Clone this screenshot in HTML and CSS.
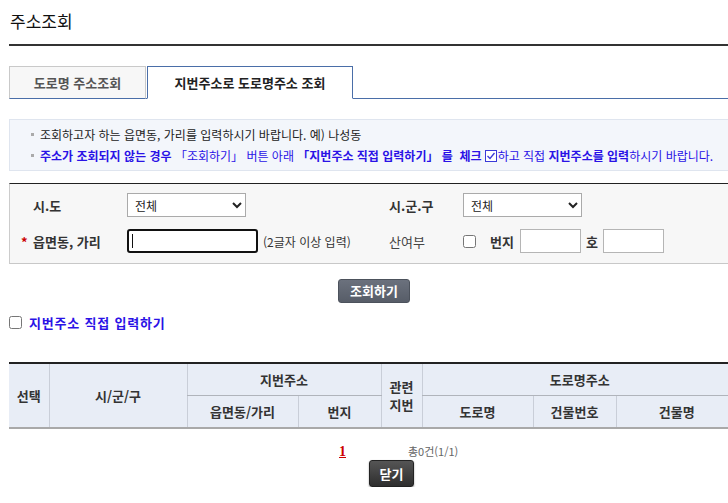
FILE: index.html
```html
<!DOCTYPE html>
<html lang="ko">
<head>
<meta charset="utf-8">
<title>주소조회</title>
<link rel="stylesheet" href="styles.css">
</head>
<body>
<div class="page">
  <h1 class="title">주소조회</h1>

  <ul class="tabs">
    <li class="tab">도로명 주소조회</li>
    <li class="tab active">지번주소로 도로명주소 조회</li>
  </ul>

  <div class="info">
    <ul>
      <li>조회하고자 하는 읍면동, 가리를 입력하시기 바랍니다. 예) 나성동</li>
      <li class="blue"><b>주소가 조회되지 않는 경우</b> 「조회하기」 버튼 아래 <b>「지번주소 직접 입력하기」 를 &nbsp;체크</b><svg class="chk-icon" width="12" height="12" viewBox="0 0 12 12"><rect x="0.5" y="0.5" width="11" height="11" fill="#fff" stroke="#3a3ad8"/><path d="M2.5 6 L5 8.5 L9.5 3" fill="none" stroke="#3a3ad8" stroke-width="1.3"/></svg>하고 직접 <b>지번주소를 입력</b>하시기 바랍니다.</li>
    </ul>
  </div>

  <div class="search">
    <div class="row">
      <div class="label">시.도</div>
      <div class="field"><select class="sel"><option>전체</option></select></div>
      <div class="label2">시.군.구</div>
      <div class="field"><select class="sel"><option>전체</option></select></div>
    </div>
    <div class="row">
      <div class="label req"><span class="star">*</span>읍면동, 가리</div>
      <div class="field">
        <span class="focus-wrap"><input class="txt focused" type="text"><span class="caret"></span></span>
        <span class="hint">(2글자 이상 입력)</span>
      </div>
      <div class="label2 light">산여부</div>
      <div class="field">
        <input type="checkbox" class="cb">
        <span class="bold-label bj">번지</span>
        <input class="txt small" type="text">
        <span class="bold-label ho">호</span>
        <input class="txt small" type="text">
      </div>
    </div>
  </div>

  <div class="btn-area">
    <button class="btn-search">조회하기</button>
  </div>

  <label class="direct">
    <input type="checkbox" class="cb">
    <span>지번주소 직접 입력하기</span>
  </label>

  <table class="result">
    <colgroup>
      <col style="width:40px">
      <col style="width:138px">
      <col style="width:111px">
      <col style="width:83px">
      <col style="width:41px">
      <col style="width:111px">
      <col style="width:83px">
      <col style="width:121px">
    </colgroup>
    <thead>
      <tr>
        <th rowspan="2">선택</th>
        <th rowspan="2">시/군/구</th>
        <th colspan="2">지번주소</th>
        <th rowspan="2" class="two">관련<br>지번</th>
        <th colspan="3">도로명주소</th>
      </tr>
      <tr>
        <th>읍면동/가리</th>
        <th>번지</th>
        <th>도로명</th>
        <th>건물번호</th>
        <th>건물명</th>
      </tr>
    </thead>
  </table>

  <div class="pager">
    <a class="pnum">1</a>
    <span class="count">총0건(1/1)</span>
  </div>
  <div class="close-area">
    <button class="btn-close">닫기</button>
  </div>
</div>
</body>
</html>
```

FILE: styles.css
```css
html, body {
  margin: 0;
  padding: 0;
  overflow: hidden;
  background: #fff;
}
body {
  font-family: "Noto Sans CJK KR", "Noto Sans", sans-serif;
  font-size: 12px;
  color: #222;
}
.page {
  margin-left: 9px;
  width: 728px;
}
.title {
  margin: 0;
  height: 44px;
  line-height: 42px;
  font-size: 17px;
  font-weight: normal;
  color: #111;
  padding-left: 1px;
  border-bottom: 2px solid #333;
  width: 730px;
}
.tabs {
  list-style: none;
  margin: 20px 0 0 0;
  padding: 0;
  display: flex;
  gap: 1px;
  border-bottom: 1px solid #4a6ea8;
  height: 32px;
}
.tab {
  box-sizing: border-box;
  height: 33px;
  border: 1px solid #c9c9c9;
  border-bottom: 1px solid #4a6ea8;
  background: #f7f7f7;
  color: #555;
  font-weight: bold;
  font-size: 13px;
  line-height: 31px;
  text-align: center;
  width: 137px;
}
.tab.active {
  width: 206px;
  background: #fff;
  color: #222;
  border: 1px solid #4a6ea8;
  border-bottom: 1px solid #fff;
}
.info {
  margin-top: 20px;
  background: #f3f6fb;
  border: 1px solid #dfe5ef;
  height: 50px;
  box-sizing: content-box;
  width: 730px;
}
.info ul {
  list-style: none;
  margin: 0;
  padding: 4px 0 0 30px;
}
.info li {
  position: relative;
  height: 21px;
  line-height: 21px;
  white-space: nowrap;
}
.info li::before {
  content: "";
  position: absolute;
  left: -9px;
  top: 9px;
  width: 3px;
  height: 3px;
  background: #aaa;
}
.info .blue {
  color: #2a12e6;
}
.chk-icon {
  vertical-align: -1px;
  margin: 0 1px 0 3px;
}
.search {
  margin-top: 12px;
  border-top: 1px solid #222;
  border-left: 1px solid #ccc;
  border-bottom: 1px solid #c8c8c8;
  background: #f7f7f7;
  padding: 9px 0 10px 0;
  display: flex;
  flex-direction: column;
  gap: 12px;
  width: 730px;
}
.row {
  display: grid;
  grid-template-columns: 117px 262px 74px auto;
  align-items: center;
  height: 24px;
}
.label, .label2 {
  font-weight: bold;
  font-size: 13px;
  color: #333;
}
.label {
  padding-left: 23px;
}
.label.req {
  padding-left: 11px;
}
.star {
  display: inline-block;
  width: 12px;
  color: #c00;
  font-weight: bold;
}
.label2.light {
  font-weight: normal;
  color: #444;
}
.field {
  display: flex;
  align-items: center;
  height: 24px;
}
.sel {
  width: 119px;
  height: 24px;
  border: 1px solid #aaa;
  border-radius: 0;
  background: #fff;
  font-family: inherit;
  font-size: 12px;
  color: #222;
  padding: 0 3px;
}
.txt {
  box-sizing: border-box;
  height: 24px;
  border: 1px solid #b5b5b5;
  background: #fff;
  padding: 0 4px;
  font-family: inherit;
  outline: none;
}
.focus-wrap {
  position: relative;
  display: inline-flex;
}
.txt.focused {
  width: 131px;
  border: 2px solid #111;
  border-radius: 3px;
}
.caret {
  position: absolute;
  left: 5px;
  top: 5px;
  width: 1px;
  height: 14px;
  background: #111;
}
.txt.small {
  width: 61px;
}
.hint {
  margin-left: 5px;
  color: #333;
}
.cb {
  margin: 0;
  width: 13px;
  height: 13px;
}
.bold-label {
  font-weight: bold;
  font-size: 13px;
  color: #333;
}
.bj {
  margin-left: 14px;
  margin-right: 6px;
}
.ho {
  margin-left: 5px;
  margin-right: 5px;
}
.btn-area {
  margin-top: 15px;
  text-align: center;
  width: 730px;
  height: 24px;
}
.btn-search {
  width: 72px;
  height: 24px;
  border: 1px solid #4c525c;
  border-radius: 3px;
  background: linear-gradient(#6b717d, #575d68);
  color: #fff;
  font-family: inherit;
  font-weight: bold;
  font-size: 13px;
  padding: 0;
  line-height: 22px;
}
.direct {
  margin-top: 13px;
  display: flex;
  align-items: center;
  gap: 7px;
  height: 13px;
  color: #2a12e6;
  font-weight: bold;
  font-size: 13px;
  letter-spacing: 0.8px;
}
.result {
  margin-top: 33px;
  border-collapse: collapse;
  table-layout: fixed;
  width: 728px;
  border-top: 2px solid #222;
  border-bottom: 2px solid #a9a9a9;
}
.result th {
  background: #e8edf6;
  color: #333;
  font-size: 13px;
  font-weight: bold;
  height: 31px;
  padding: 0;
  border-left: 1px solid #c9ced8;
  border-bottom: 1px solid #b0b4bb;
}
.result tr:first-child th:first-child {
  border-left: none;
}
.result th.two {
  line-height: 18px;
}
.pager {
  display: flex;
  align-items: baseline;
  padding-left: 330px;
  margin-top: 14px;
  height: 16px;
}
.pnum {
  color: #c00;
  font-family: "Liberation Serif", serif;
  font-weight: bold;
  font-size: 14px;
  text-decoration: underline;
}
.count {
  margin-left: 62px;
  font-size: 11px;
  color: #666;
}
.close-area {
  margin-top: 1px;
  padding-left: 360px;
}
.btn-close {
  width: 45px;
  height: 27px;
  border: 1px solid #222;
  border-radius: 3px;
  background: linear-gradient(#555, #2e2e2e);
  color: #fff;
  font-family: inherit;
  font-weight: bold;
  font-size: 13px;
  padding: 0;
  box-shadow: 0 1px 2px rgba(0,0,0,0.4);
}
```
